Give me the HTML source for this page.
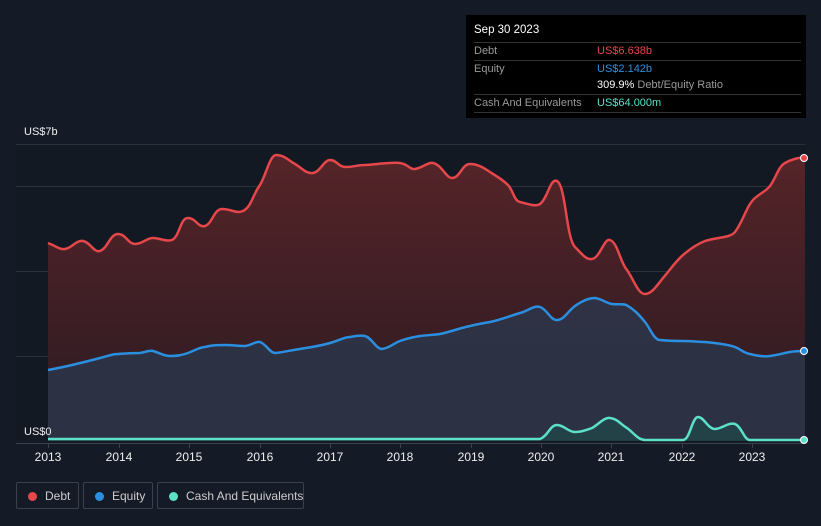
<!DOCTYPE html>
<html><head><meta charset="utf-8"><style>
html,body{margin:0;width:821px;height:526px;overflow:hidden}
body{background:#151b26;font-family:"Liberation Sans",sans-serif;position:relative}
.tip{position:absolute;left:466px;top:15px;width:340px;height:103px;background:#000;color:#fff;font-size:11px}
.tip .r{position:absolute;left:8px;width:327px;border-top:1px solid #333;height:17px;line-height:17px}
.tip .l{color:#999}
.tip .v{position:absolute;left:123px;top:0}
.leg{position:absolute;top:482px;height:27px;border:1px solid #3a4050;border-radius:2px;color:#ccc;font-size:12px;line-height:27px;box-sizing:border-box;white-space:nowrap}
.leg i{position:absolute;top:9px;left:11px;width:9px;height:9px;border-radius:50%}
.yr{position:absolute;top:450px;color:#eee;font-size:12px;transform:translateX(-50%)}
</style></head><body>
<svg width="821" height="526" style="position:absolute;left:0;top:0">
<defs>
<linearGradient id="dg" x1="0" y1="0" x2="0" y2="1"><stop offset="0" stop-color="#552428"/><stop offset="1" stop-color="#2a1a22"/></linearGradient>
</defs>
<rect x="16" y="144" width="789" height="296" fill="#131923"/>
<g stroke="#2a303c" stroke-width="1">
<line x1="16" y1="144.5" x2="805" y2="144.5"/><line x1="16" y1="186.5" x2="805" y2="186.5"/><line x1="16" y1="271.5" x2="805" y2="271.5"/><line x1="16" y1="356.5" x2="805" y2="356.5"/>
</g>
<path d="M48,243 C56,246 60,250 65,249 C72,248 76,240 83,241 C90,242 94,253 100,251 C108,248 110,234 118,234 C126,234 128,244 135,244 C143,244 146,238 153,238 C160,238 166,242 172,240 C180,236 180,218 188,218 C196,218 198,228 205,226 C212,224 214,209 222,209 C232,209 236,214 243,211 C252,206 252,196 260,185 C266,175 270,155 276,155 C284,155 288,160 295,164 C302,168 306,174 313,173 C320,172 324,160 330,160 C337,160 338,167 346,167 C354,167 356,165 365,165 C380,164 392,162 400,163 C408,164 410,170 415,169 C422,168 428,162 433,163 C442,165 446,178 452,178 C460,178 462,164 470,164 C478,164 484,168 490,172 C498,177 503,180 508,185 C513,190 514,201 520,202 C528,204 536,207 540,204 C548,198 550,178 557,181 C566,186 566,238 575,247 C582,254 586,260 592,259 C600,258 604,238 610,240 C618,243 620,262 627,270 C634,280 638,294 645,294 C652,294 658,284 663,278 C670,270 675,262 683,255 C690,249 697,244 705,241 C718,237 730,238 735,232 C744,220 746,206 755,198 C762,192 765,192 770,186 C776,178 778,167 785,163 C792,159 798,158 805,157 L805,440 L48,440 Z" fill="url(#dg)"/>
<path d="M48,370 C70,366 85,362 100,358 C108,356 112,354 118,354 C130,353 138,353 140,353 C146,352 150,350 153,351 C160,353 164,356 170,356 C178,356 182,355 188,353 C196,350 200,347 205,347 C212,345 218,345 225,345 C232,345 238,346 245,346 C252,345 256,341 260,342 C266,344 270,353 275,353 C285,352 292,350 300,349 C312,347 320,346 330,343 C338,341 344,337 350,337 C356,336 360,335 365,336 C372,338 376,349 382,349 C390,348 394,343 400,341 C408,338 414,337 420,336 C428,335 434,335 440,334 C450,332 460,328 470,326 C478,324 484,323 490,322 C500,320 510,316 520,313 C528,311 534,305 540,307 C548,310 550,320 557,320 C564,320 568,311 575,306 C582,301 588,298 595,298 C602,299 606,303 612,304 C618,305 624,303 628,306 C636,311 640,316 645,322 C650,328 654,340 660,340 C670,341 676,341 683,341 C692,341 698,342 705,342 C715,343 727,344 735,347 C742,350 744,353 750,354 C758,356 764,357 770,356 C778,355 784,353 790,352 C796,351 800,351 805,351 L805,440 L48,440 Z" fill="#2c3448" fill-opacity="0.9"/>
<path d="M48,440 L540,440 C548,436 550,425 557,425 C564,425 568,432 575,432 C582,432 586,430 592,428 C598,425 604,417 610,418 C618,419 620,424 627,428 C634,433 638,440 645,440 L683,440 C690,440 692,417 698,417 C704,417 708,429 715,429 C722,429 728,422 735,424 C742,427 744,440 750,440 L805,440 L805,441 L48,441Z" fill="#1f4a4a" fill-opacity="0.7"/>
<path d="M48,243 C56,246 60,250 65,249 C72,248 76,240 83,241 C90,242 94,253 100,251 C108,248 110,234 118,234 C126,234 128,244 135,244 C143,244 146,238 153,238 C160,238 166,242 172,240 C180,236 180,218 188,218 C196,218 198,228 205,226 C212,224 214,209 222,209 C232,209 236,214 243,211 C252,206 252,196 260,185 C266,175 270,155 276,155 C284,155 288,160 295,164 C302,168 306,174 313,173 C320,172 324,160 330,160 C337,160 338,167 346,167 C354,167 356,165 365,165 C380,164 392,162 400,163 C408,164 410,170 415,169 C422,168 428,162 433,163 C442,165 446,178 452,178 C460,178 462,164 470,164 C478,164 484,168 490,172 C498,177 503,180 508,185 C513,190 514,201 520,202 C528,204 536,207 540,204 C548,198 550,178 557,181 C566,186 566,238 575,247 C582,254 586,260 592,259 C600,258 604,238 610,240 C618,243 620,262 627,270 C634,280 638,294 645,294 C652,294 658,284 663,278 C670,270 675,262 683,255 C690,249 697,244 705,241 C718,237 730,238 735,232 C744,220 746,206 755,198 C762,192 765,192 770,186 C776,178 778,167 785,163 C792,159 798,158 805,157" fill="none" stroke="#e5474b" stroke-width="2.5"/>
<path d="M48,370 C70,366 85,362 100,358 C108,356 112,354 118,354 C130,353 138,353 140,353 C146,352 150,350 153,351 C160,353 164,356 170,356 C178,356 182,355 188,353 C196,350 200,347 205,347 C212,345 218,345 225,345 C232,345 238,346 245,346 C252,345 256,341 260,342 C266,344 270,353 275,353 C285,352 292,350 300,349 C312,347 320,346 330,343 C338,341 344,337 350,337 C356,336 360,335 365,336 C372,338 376,349 382,349 C390,348 394,343 400,341 C408,338 414,337 420,336 C428,335 434,335 440,334 C450,332 460,328 470,326 C478,324 484,323 490,322 C500,320 510,316 520,313 C528,311 534,305 540,307 C548,310 550,320 557,320 C564,320 568,311 575,306 C582,301 588,298 595,298 C602,299 606,303 612,304 C618,305 624,303 628,306 C636,311 640,316 645,322 C650,328 654,340 660,340 C670,341 676,341 683,341 C692,341 698,342 705,342 C715,343 727,344 735,347 C742,350 744,353 750,354 C758,356 764,357 770,356 C778,355 784,353 790,352 C796,351 800,351 805,351" fill="none" stroke="#2b8fe0" stroke-width="2.5"/>
<path d="M48,439 L540,439 C548,436 550,425 557,425 C564,425 568,432 575,432 C582,432 586,430 592,428 C598,425 604,417 610,418 C618,419 620,424 627,428 C634,433 638,440 645,440 L683,440 C690,440 692,417 698,417 C704,417 708,429 715,429 C722,429 728,422 735,424 C742,427 744,440 750,440 L805,440" fill="none" stroke="#5ce0c8" stroke-width="2.5"/>
<line x1="16" y1="443.5" x2="805" y2="443.5" stroke="#3a404c"/>
<g stroke="#3a404c"><line x1="48.5" y1="443" x2="48.5" y2="448"/><line x1="119.5" y1="443" x2="119.5" y2="448"/><line x1="189.5" y1="443" x2="189.5" y2="448"/><line x1="260.5" y1="443" x2="260.5" y2="448"/><line x1="330.5" y1="443" x2="330.5" y2="448"/><line x1="400.5" y1="443" x2="400.5" y2="448"/><line x1="471.5" y1="443" x2="471.5" y2="448"/><line x1="541.5" y1="443" x2="541.5" y2="448"/><line x1="611.5" y1="443" x2="611.5" y2="448"/><line x1="682.5" y1="443" x2="682.5" y2="448"/><line x1="752.5" y1="443" x2="752.5" y2="448"/></g>
<circle cx="804" cy="158" r="3.5" fill="#e5474b" stroke="#fff" stroke-width="1"/>
<circle cx="804" cy="351" r="3.5" fill="#2b8fe0" stroke="#fff" stroke-width="1"/>
<circle cx="804" cy="440" r="3.5" fill="#5ce0c8" stroke="#fff" stroke-width="1"/>
<text x="24" y="135" fill="#eee" font-size="11" font-family="Liberation Sans">US$7b</text>
<text x="24" y="435" fill="#eee" font-size="11" font-family="Liberation Sans">US$0</text>
</svg>
<div class="yr" style="left:48px">2013</div><div class="yr" style="left:119px">2014</div><div class="yr" style="left:189px">2015</div><div class="yr" style="left:260px">2016</div><div class="yr" style="left:330px">2017</div><div class="yr" style="left:400px">2018</div><div class="yr" style="left:471px">2019</div><div class="yr" style="left:541px">2020</div><div class="yr" style="left:611px">2021</div><div class="yr" style="left:682px">2022</div><div class="yr" style="left:752px">2023</div>
<div class="tip">
<div style="position:absolute;left:8px;top:9px;font-size:11.5px">Sep 30 2023</div>
<div class="r" style="top:27px"><span class="l">Debt</span><span class="v" style="color:#e5474b">US$6.638b</span></div>
<div class="r" style="top:45px"><span class="l">Equity</span><span class="v" style="color:#2b8fe0">US$2.142b</span></div>
<div class="r" style="top:62px;border:none"><span class="v">309.9% <span style="color:#999">Debt/Equity Ratio</span></span></div>
<div class="r" style="top:79px;border-bottom:1px solid #333"><span class="l">Cash And Equivalents</span><span class="v" style="color:#5ce0c8">US$64.000m</span></div>
</div>
<div class="leg" style="left:16px;width:63px"><i style="background:#e5474b"></i><span style="position:absolute;left:28px">Debt</span></div>
<div class="leg" style="left:83px;width:70px"><i style="background:#2b8fe0"></i><span style="position:absolute;left:28px">Equity</span></div>
<div class="leg" style="left:157px;width:147px"><i style="background:#5ce0c8"></i><span style="position:absolute;left:28px">Cash And Equivalents</span></div>
</body></html>
